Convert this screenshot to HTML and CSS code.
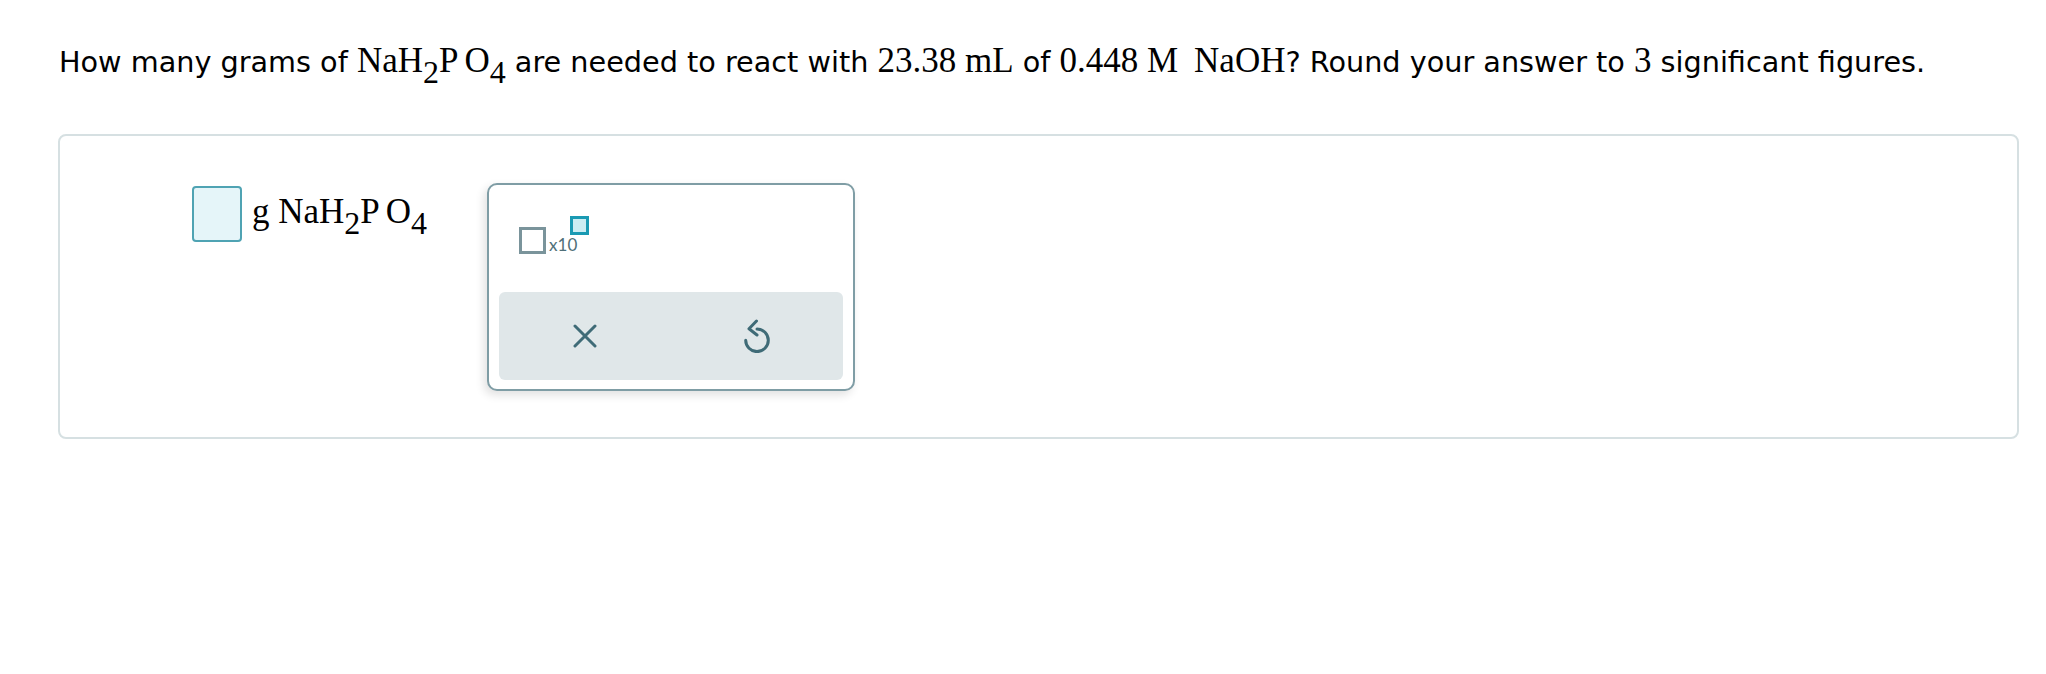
FILE: index.html
```html
<!DOCTYPE html>
<html lang="en">
<head>
    <meta charset="UTF-8">
    <meta name="viewport" content="width=device-width, initial-scale=1.0">
    <title>Question</title>
    <link rel="stylesheet" href="styles.css">
</head>
<body>
    <p class="question">
        How many grams of <span class="math">NaH<sub>2</sub>P<span class="gap"></span>O<sub>4</sub></span> are needed to react with
        <span class="math">23.38 mL</span> of <span class="math">0.448 M<span class="space"></span>NaOH</span>? Round your answer to
        <span class="math">3</span> significant figures.
    </p>

    <div class="answer-box">
        <div class="answer-row">
            <div class="answer-input"></div>
            <div class="answer-unit math">g NaH<sub>2</sub>P<span class="gap"></span>O<sub>4</sub></div>

            <div class="palette">
                <div class="notation">
                    <div class="mantissa"></div>
                    <div class="times">x10</div>
                    <div class="exponent"></div>
                </div>
                <div class="keys">
                    <button class="key" title="Clear">
                        <svg width="24" height="24" viewBox="0 0 24 24">
                            <path d="M2 2 L22 22 M22 2 L2 22" stroke="#3f6b77" stroke-width="3" stroke-linecap="round" fill="none"/>
                        </svg>
                    </button>
                    <button class="key" title="Undo">
                        <svg width="26" height="34" viewBox="0 0 26 34">
                            <path d="M13 10 A11.3 11.3 0 1 1 1.7 21.3" stroke="#3f6b77" stroke-width="3" stroke-linecap="round" fill="none"/>
                            <path d="M12.5 2 L5 9.8 L13 16" stroke="#3f6b77" stroke-width="3" stroke-linecap="round" stroke-linejoin="round" fill="none"/>
                        </svg>
                    </button>
                </div>
            </div>
        </div>
    </div>
</body>
</html>
```

FILE: styles.css
```css
body {
    margin: 0;
    background-color: #ffffff;
    font-family: "DejaVu Sans", Verdana, sans-serif;
    color: #000000;
}
.question {
    margin: 0;
    padding: 41px 0 0 59px;
    height: 93px;
    font-size: 28.7px;
    line-height: 40px;
    white-space: nowrap;
}
.math {
    font-family: "Liberation Serif", "Times New Roman", serif;
    font-size: 35px;
}
.math sub {
    font-size: 32px;
    vertical-align: -11px;
    line-height: 0;
}
.gap {
    display: inline-block;
    width: 6px;
}
.space {
    display: inline-block;
    width: 16px;
}
.answer-box {
    margin: 0 27px 0 58px;
    height: 305px;
    box-sizing: border-box;
    border: 2px solid #d6e0e2;
    border-radius: 8px;
    padding: 47px 0 0 132px;
}
.answer-row {
    display: flex;
    align-items: flex-start;
}
.answer-input {
    margin-top: 3px;
    width: 50px;
    height: 56px;
    box-sizing: border-box;
    border: 2px solid #4fa3b3;
    border-radius: 4px;
    background-color: #e5f5f9;
}
.answer-unit {
    margin-top: 9px;
    margin-left: 10px;
    line-height: 40px;
    white-space: nowrap;
}
.palette {
    margin-left: 60px;
    width: 368px;
    height: 208px;
    box-sizing: border-box;
    padding: 0 10px 9px;
    background-color: #ffffff;
    border: 2px solid #7f9da5;
    border-radius: 10px;
    box-shadow: -3px 4px 10px rgba(0, 0, 0, 0.12);
}
.notation {
    height: 107px;
    box-sizing: border-box;
    padding: 31px 0 0 20px;
    display: flex;
    align-items: flex-start;
}
.mantissa {
    margin-top: 11px;
    width: 27px;
    height: 27px;
    box-sizing: border-box;
    border: 3px solid #7a949b;
}
.times {
    margin-top: 20px;
    margin-left: 3px;
    font-family: Lato, "Open Sans", sans-serif;
    font-size: 17px;
    line-height: 17px;
    color: #4f6f78;
}
.exponent {
    margin-left: -7px;
    width: 19px;
    height: 19px;
    box-sizing: border-box;
    border: 3px solid #1a9ab3;
    background-color: #ccedf3;
}
.keys {
    height: 88px;
    display: flex;
    background-color: #e0e7e9;
    border-radius: 6px;
}
.key {
    flex: 1;
    display: flex;
    justify-content: center;
    align-items: center;
    background: none;
    border: none;
    padding: 0;
    cursor: pointer;
}
```
